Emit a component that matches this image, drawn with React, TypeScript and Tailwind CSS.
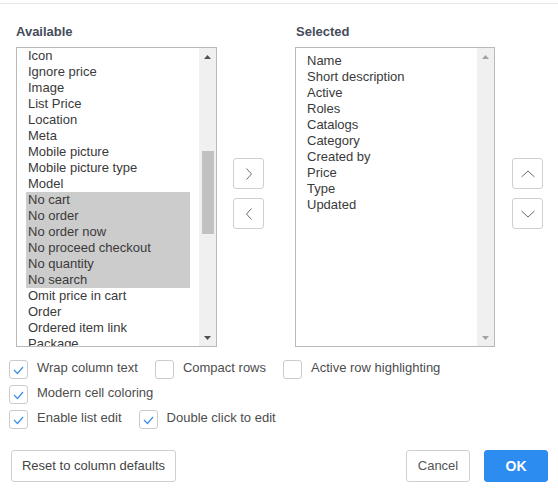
import React from "react";

const available = [
  "Icon",
  "Ignore price",
  "Image",
  "List Price",
  "Location",
  "Meta",
  "Mobile picture",
  "Mobile picture type",
  "Model",
  "No cart",
  "No order",
  "No order now",
  "No proceed checkout",
  "No quantity",
  "No search",
  "Omit price in cart",
  "Order",
  "Ordered item link",
  "Package",
];
const highlighted = new Set([
  "No cart",
  "No order",
  "No order now",
  "No proceed checkout",
  "No quantity",
  "No search",
]);

const selected = [
  "Name",
  "Short description",
  "Active",
  "Roles",
  "Catalogs",
  "Category",
  "Created by",
  "Price",
  "Type",
  "Updated",
];

function TriUp({ color }: { color: string }) {
  return (
    <svg width="7" height="4" viewBox="0 0 7 4">
      <polygon points="0,4 3.5,0 7,4" fill={color} />
    </svg>
  );
}
function TriDown({ color }: { color: string }) {
  return (
    <svg width="7" height="4" viewBox="0 0 7 4">
      <polygon points="0,0 3.5,4 7,0" fill={color} />
    </svg>
  );
}

function SideButton({ dir }: { dir: "right" | "left" | "up" | "down" }) {
  let icon: React.ReactNode = null;
  if (dir === "right")
    icon = (
      <svg width="8" height="12" viewBox="0 0 8 12">
        <polyline points="1.5,0.5 6.5,6 1.5,11.5" fill="none" stroke="#6b6b6b" strokeWidth="1" />
      </svg>
    );
  if (dir === "left")
    icon = (
      <svg width="8" height="12" viewBox="0 0 8 12">
        <polyline points="6.5,0.5 1.5,6 6.5,11.5" fill="none" stroke="#6b6b6b" strokeWidth="1" />
      </svg>
    );
  if (dir === "up")
    icon = (
      <svg width="14" height="8" viewBox="0 0 14 8">
        <polyline points="0.5,7 7,1 13.5,7" fill="none" stroke="#6b6b6b" strokeWidth="1" />
      </svg>
    );
  if (dir === "down")
    icon = (
      <svg width="14" height="8" viewBox="0 0 14 8">
        <polyline points="0.5,1 7,7 13.5,1" fill="none" stroke="#6b6b6b" strokeWidth="1" />
      </svg>
    );
  return (
    <button className="w-[31px] h-[31px] flex items-center justify-center border border-[#cfcfcf] rounded-[3px] bg-white">
      {icon}
    </button>
  );
}

function Check({ checked, label }: { checked: boolean; label: string }) {
  return (
    <div className="flex items-start mr-[17px]">
      <div className="w-[19px] h-[19px] border border-[#cbcbcb] rounded-[3px] bg-white flex items-center justify-center">
        {checked && (
          <svg width="17" height="17" viewBox="0 0 17 17">
            <polyline
              points="4,9 7.5,12.5 13,6"
              fill="none"
              stroke="#3a8ee6"
              strokeWidth="1.2"
            />
          </svg>
        )}
      </div>
      <span className="ml-[9px] text-[13px] leading-[16px] text-[#4d4d4d]">{label}</span>
    </div>
  );
}

export default function App() {
  return (
    <div
      className="w-[558px] h-[493px] bg-white overflow-hidden"
      style={{ fontFamily: '"Liberation Sans", Arial, sans-serif' }}
    >
      <div className="h-[4px] border-b border-[#e8e8e8]" />
      <div className="flex pt-[18px] pl-[16px]">
        {/* Available */}
        <div className="w-[201px]">
          <div className="h-[20px] leading-[20px] text-[13px] font-bold text-[#464c5b]">Available</div>
          <div className="mt-[5px] h-[300px] border border-[#b9b9b9] flex bg-white">
            <div className="flex-1 overflow-hidden">
              {available.map((it) => (
                <div
                  key={it}
                  className={
                    "ml-[9px] mr-[9px] pl-[2px] h-[16px] leading-[16px] text-[13px] text-[#3a3a3a] whitespace-nowrap " +
                    (highlighted.has(it) ? "bg-[#cccccc]" : "")
                  }
                >
                  {it}
                </div>
              ))}
            </div>
            <div className="w-[17px] bg-[#f0f0f0] flex flex-col">
              <div className="h-[17px] flex items-center justify-center">
                <TriUp color="#505050" />
              </div>
              <div className="h-[86px]" />
              <div className="h-[83px] w-[12px] mx-auto bg-[#c1c1c1]" />
              <div className="flex-1" />
              <div className="h-[17px] flex items-center justify-center">
                <TriDown color="#505050" />
              </div>
            </div>
          </div>
        </div>

        {/* move buttons */}
        <div className="ml-[16px] w-[31px] pt-[136px] flex flex-col gap-[9px]">
          <SideButton dir="right" />
          <SideButton dir="left" />
        </div>

        {/* Selected */}
        <div className="ml-[31px] w-[200px]">
          <div className="h-[20px] leading-[20px] text-[13px] font-bold text-[#464c5b] pl-[1px]">Selected</div>
          <div className="mt-[5px] h-[300px] border border-[#b9b9b9] flex bg-white">
            <div className="flex-1 overflow-hidden pt-[5px] pl-[11px]">
              {selected.map((it) => (
                <div key={it} className="h-[16px] leading-[16px] text-[13px] text-[#3a3a3a] whitespace-nowrap">
                  {it}
                </div>
              ))}
            </div>
            <div className="w-[17px] bg-[#f0f0f0] flex flex-col">
              <div className="h-[17px] flex items-center justify-center">
                <TriUp color="#a3a3a3" />
              </div>
              <div className="flex-1" />
              <div className="h-[17px] flex items-center justify-center">
                <TriDown color="#a3a3a3" />
              </div>
            </div>
          </div>
        </div>

        {/* order buttons */}
        <div className="ml-[17px] w-[31px] pt-[136px] flex flex-col gap-[9px]">
          <SideButton dir="up" />
          <SideButton dir="down" />
        </div>
      </div>

      <div className="mt-[13px] pl-[9px] flex flex-col gap-[6px]">
        <div className="flex">
          <Check checked label="Wrap column text" />
          <Check checked={false} label="Compact rows" />
          <Check checked={false} label="Active row highlighting" />
        </div>
        <div className="flex">
          <Check checked label="Modern cell coloring" />
        </div>
        <div className="flex">
          <Check checked label="Enable list edit" />
          <Check checked label="Double click to edit" />
        </div>
      </div>

      <div className="mt-[21px] pl-[11px] pr-[10px] flex items-center">
        <button className="w-[165px] h-[32px] border border-[#cfcfcf] rounded-[3px] bg-white text-[13px] text-[#444444]">
          Reset to column defaults
        </button>
        <div className="flex-1" />
        <button className="w-[64px] h-[32px] border border-[#cfcfcf] rounded-[3px] bg-white text-[13px] text-[#555555]">
          Cancel
        </button>
        <button className="ml-[14px] w-[64px] h-[32px] border border-[#2d8cf0] rounded-[3px] bg-[#2d8cf0] text-[14px] font-bold text-white">
          OK
        </button>
      </div>
    </div>
  );
}
